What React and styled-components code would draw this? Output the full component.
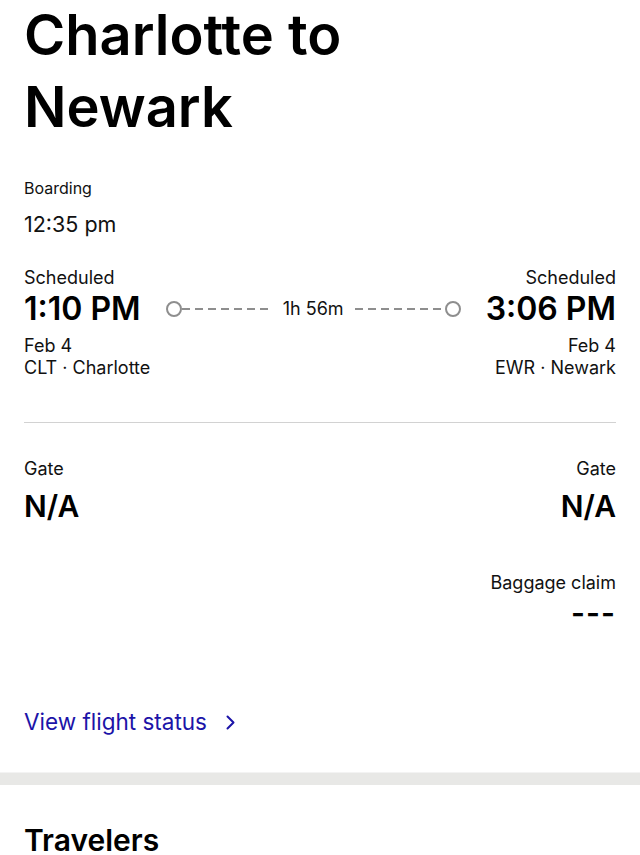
import React from "react";
import styled, { createGlobalStyle } from "styled-components";

const GlobalStyle = createGlobalStyle`
  body {
    margin: 0;
    background: #fff;
    color: #111;
    font-family: Inter, "Noto Sans", "Liberation Sans", sans-serif;
  }
`;

const Page = styled.div`
  width: 640px;
  height: 855px;
  overflow: hidden;
  background: #fff;
`;

const Section = styled.section`
  padding: 0 24px;
`;

const Title = styled.h1`
  margin: -1px 0 0;
  font-size: 56px;
  line-height: 72px;
  font-weight: 600;
  color: #000;
`;

const Label = styled.div`
  margin-top: ${(p) => p.$mt || 0}px;
  font-size: ${(p) => p.$size || 18}px;
  line-height: ${(p) => (p.$size === 16 ? 20 : 22)}px;
  text-align: ${(p) => (p.$right ? "right" : "left")};
`;

const BoardingTime = styled.div`
  margin-top: 13px;
  font-size: 21.5px;
  line-height: 26px;
`;

const Flight = styled.div`
  margin-top: 30px;
`;

const SplitRow = styled.div`
  display: flex;
  justify-content: space-between;
  align-items: flex-start;
  margin-top: ${(p) => p.$mt || 0}px;
`;

const Side = styled.div`
  text-align: ${(p) => (p.$right ? "right" : "left")};
`;

const TimeRow = styled.div`
  display: flex;
  align-items: center;
  gap: 25px;
  margin-top: 2px;
`;

const BigValue = styled.div`
  margin-top: ${(p) => p.$mt || 0}px;
  font-size: ${(p) => p.$size || 30}px;
  line-height: 36px;
  font-weight: 600;
  color: #000;
  text-align: ${(p) => (p.$right ? "right" : "left")};
  white-space: nowrap;
`;

const Timeline = styled.div`
  flex: 1;
  display: flex;
  align-items: center;
`;

const Stop = styled.span`
  width: 16px;
  height: 16px;
  box-sizing: border-box;
  border: 2.5px solid #8e8e8e;
  border-radius: 50%;
  flex-shrink: 0;
`;

const Dashes = styled.span`
  flex: 1;
  height: 2px;
  background: repeating-linear-gradient(
    to right,
    #8e8e8e 0 8px,
    transparent 8px 13px
  );
`;

const Duration = styled.span`
  padding: 0 11px;
  font-size: 18px;
  line-height: 22px;
  color: #111;
  white-space: nowrap;
`;

const Divider = styled.hr`
  margin: 43px 0 0;
  border: 0;
  height: 1px;
  background: #d2d2d2;
`;

const Baggage = styled.div`
  display: flex;
  flex-direction: column;
  align-items: flex-end;
`;

const Dash = styled(BigValue)`
  letter-spacing: 1px;
`;

const Link = styled.a`
  display: inline-flex;
  align-items: center;
  gap: 19px;
  margin-top: 78px;
  font-size: 22.5px;
  line-height: 26px;
  color: #1c14a8;
  text-decoration: none;
  cursor: pointer;
`;

const Band = styled.div`
  margin-top: 37px;
  height: 12px;
  background: #e8e8e6;
  border-top: 1px solid #f3f3f3;
`;

const SectionTitle = styled.h2`
  margin: 37px 0 0;
  font-size: 30px;
  line-height: 36px;
  font-weight: 600;
  color: #000;
`;

const Chevron = () => (
  <svg width="9" height="15" viewBox="0 0 9 15" fill="none">
    <polyline
      points="1.5,1.5 7.5,7.5 1.5,13.5"
      stroke="#1c14a8"
      strokeWidth="2"
      strokeLinecap="round"
      strokeLinejoin="round"
    />
  </svg>
);

const App = () => {
  return (
    <Page>
      <GlobalStyle />
      <Section>
        <Title>
          Charlotte to
          <br />
          Newark
        </Title>

        <Label $size={16} $mt={35}>
          Boarding
        </Label>
        <BoardingTime>12:35 pm</BoardingTime>

        <Flight>
          <SplitRow>
            <Label>Scheduled</Label>
            <Label $right>Scheduled</Label>
          </SplitRow>
          <TimeRow>
            <BigValue $size={32}>1:10 PM</BigValue>
            <Timeline>
              <Stop />
              <Dashes />
              <Duration>1h 56m</Duration>
              <Dashes />
              <Stop />
            </Timeline>
            <BigValue $size={32} $right>
              3:06 PM
            </BigValue>
          </TimeRow>
          <SplitRow $mt={8}>
            <Side>
              <Label>Feb 4</Label>
              <Label>CLT · Charlotte</Label>
            </Side>
            <Side $right>
              <Label $right>Feb 4</Label>
              <Label $right>EWR · Newark</Label>
            </Side>
          </SplitRow>
        </Flight>

        <Divider />

        <SplitRow $mt={35}>
          <Side>
            <Label>Gate</Label>
            <BigValue $mt={8}>N/A</BigValue>
          </Side>
          <Side $right>
            <Label $right>Gate</Label>
            <BigValue $mt={8} $right>
              N/A
            </BigValue>
          </Side>
        </SplitRow>

        <Baggage>
          <Label $mt={48} $right>
            Baggage claim
          </Label>
          <Dash $mt={1} $right>
            ---
          </Dash>
        </Baggage>

        <Link>
          View flight status
          <Chevron />
        </Link>
      </Section>

      <Band />

      <Section>
        <SectionTitle>Travelers</SectionTitle>
      </Section>
    </Page>
  );
};

export default App;
